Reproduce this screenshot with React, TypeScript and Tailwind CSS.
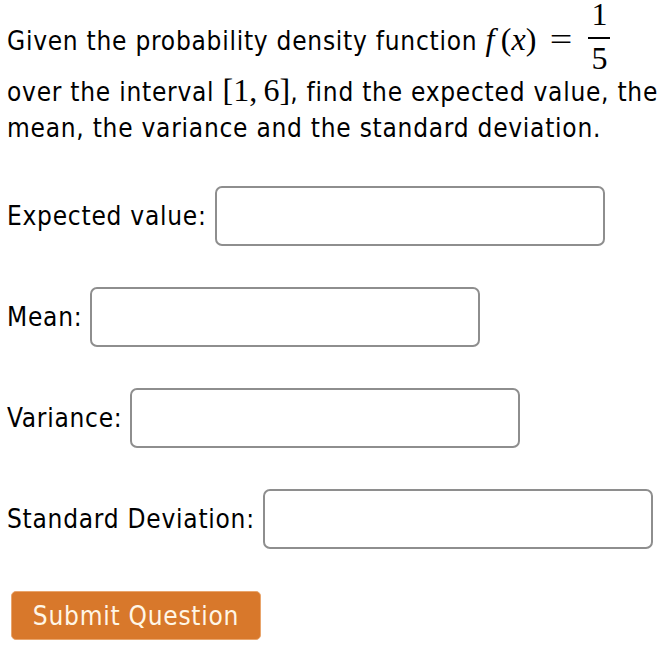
export default function App() {
  const math = "font-['Liberation_Serif','DejaVu_Serif',serif] text-[32px] leading-none tracking-normal";
  const box = "w-[390px] h-[60px] rounded-[7px] border-2 border-[#8e8e8e] bg-white";
  return (
    <div className="w-[665px] h-[645px] bg-white text-black font-['DejaVu_Sans_Condensed','DejaVu_Sans',sans-serif] text-[26px] tracking-[0.75px] overflow-hidden">
      <div className="pl-[7px] pt-[1px] leading-[36px]">
        <div className="whitespace-nowrap">
          Given the probability density function{" "}
          <span className={math}>
            <i>f</i>&thinsp;(<i>x</i>)<span className="inline-block w-[16px]"></span>
            <span className="inline-block scale-x-125">=</span>
            <span className="inline-block w-[18px]"></span>
            <span className="inline-flex flex-col items-center align-[25px]">
              <span className="leading-[26px] pb-[10px] px-[2px]">1</span>
              <span className="h-[2px] w-[22px] bg-black"></span>
              <span className="leading-[26px] pt-[6px]">5</span>
            </span>
          </span>
        </div>
        <div className="mt-[3px] whitespace-nowrap">
          over the interval <span className={math}>[1,&thinsp;6]</span>, find the expected value, the
        </div>
        <div className="whitespace-nowrap">mean, the variance and the standard deviation.</div>
      </div>

      <div className="pl-[7px] mt-[40px] flex flex-col gap-[41px]">
        <div className="flex items-center gap-[8px]">
          <span>Expected value:</span>
          <div className={box}></div>
        </div>
        <div className="flex items-center gap-[8px]">
          <span>Mean:</span>
          <div className={box}></div>
        </div>
        <div className="flex items-center gap-[8px]">
          <span>Variance:</span>
          <div className={box}></div>
        </div>
        <div className="flex items-center gap-[8px]">
          <span>Standard Deviation:</span>
          <div className={box}></div>
        </div>
      </div>

      <div className="pl-[11px] mt-[42px]">
        <button className="w-[250px] h-[49px] rounded-[5px] bg-[#d8782b] border border-[#e9a56c] text-[#fff6e6] text-[26px] leading-none flex items-center justify-center">
          Submit Question
        </button>
      </div>
    </div>
  );
}
